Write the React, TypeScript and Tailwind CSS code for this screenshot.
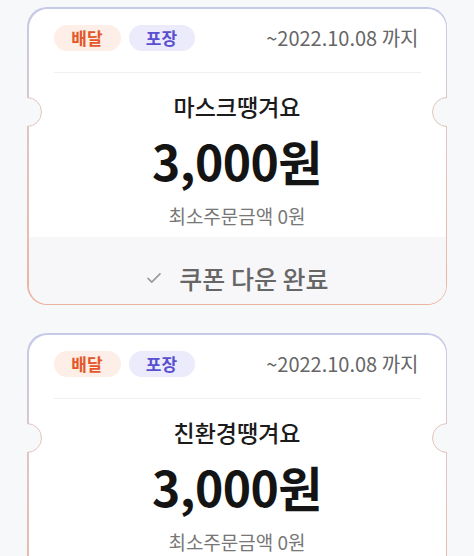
import React from "react";

const FONT = { fontFamily: '"Noto Sans CJK KR", "Noto Sans", sans-serif' };

function Coupon({ title }: { title: string }) {
  return (
    <div className="relative rounded-[20px] p-[1.5px] bg-linear-to-b from-[#c6cae8] via-[#e2c3c0] to-[#ebb49f] overflow-hidden">
      <div className="rounded-[18.5px] bg-white overflow-hidden">
        <div className="flex items-center justify-between pl-[25px] pr-[27px] pt-[16px] pb-[21px]">
          <div className="flex items-center gap-[8px]">
            <span className="h-[26px] w-[67px] rounded-full bg-[#fdefe7] text-[#e4572a] font-bold text-[17px] leading-[26px] text-center">
              배달
            </span>
            <span className="h-[26px] w-[66px] rounded-full bg-[#ebebfb] text-[#5a4fd0] font-bold text-[17px] leading-[26px] text-center">
              포장
            </span>
          </div>
          <span className="text-[20px] text-[#666] leading-[26px]">~2022.10.08 까지</span>
        </div>
        <div className="mx-[25px] h-px bg-[#efeff2]" />
        <div className="flex flex-col items-center pt-[18px] pb-[7px]">
          <div className="text-[23px] font-medium text-[#1b1b1b] leading-[30px]">{title}</div>
          <div className="text-[48px] font-bold text-[#141414] leading-[60px] mt-[9px] tracking-[-0.5px]">3,000원</div>
          <div className="text-[19px] text-[#777] leading-[28px] mt-[12px]">최소주문금액 0원</div>
        </div>
        <div className="bg-[#f7f7f9] flex items-center justify-center gap-[16px] pt-[26px] pb-[11px]">
          <svg width="18" height="18" viewBox="0 0 24 24" fill="none" stroke="#9a9a9a" strokeWidth="2.2" strokeLinecap="round" strokeLinejoin="round">
            <path d="M4 12.5l5 5L20 6.5" />
          </svg>
          <span className="text-[25px] font-medium text-[#666] leading-[30px]">쿠폰 다운 완료</span>
        </div>
      </div>
      <div className="absolute left-[-15px] top-[90px] w-[30px] h-[30px] rounded-full bg-[#f7f8fa] border-[1.5px] border-[#e2c4bb]" />
      <div className="absolute right-[-15px] top-[90px] w-[30px] h-[30px] rounded-full bg-[#f7f8fa] border-[1.5px] border-[#e2c4bb]" />
    </div>
  );
}

export default function App() {
  return (
    <div className="min-h-screen bg-[#f7f8fa] px-[27px] pt-[7px] pb-[30px] flex flex-col gap-[28px]" style={FONT}>
      <Coupon title="마스크땡겨요" />
      <Coupon title="친환경땡겨요" />
    </div>
  );
}
